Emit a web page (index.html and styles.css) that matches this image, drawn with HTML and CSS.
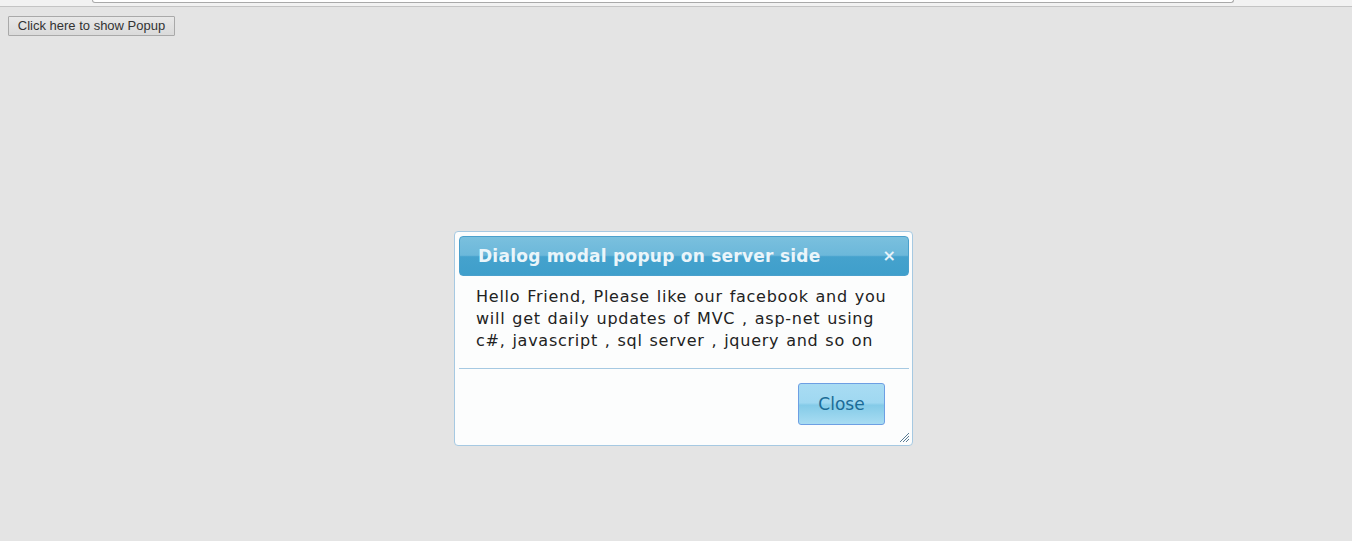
FILE: index.html
```html
<!DOCTYPE html>
<html>
<head>
<meta charset="utf-8">
<title>Dialog modal popup</title>
<link rel="stylesheet" href="styles.css">
</head>
<body>
<div class="topstrip">
  <div class="topfield"></div>
</div>
<div class="page">
  <button class="show-btn" type="button">Click here to show Popup</button>
</div>

<div class="dialog" role="dialog">
  <div class="dialog-titlebar">
    <span class="dialog-title">Dialog modal popup on server side</span>
    <span class="dialog-x">&#215;</span>
  </div>
  <div class="dialog-content">
    Hello Friend, Please like our facebook and you will get daily updates of MVC , asp-net using c#, javascript , sql server , jquery and so on
  </div>
  <div class="dialog-buttonpane">
    <button class="close-btn" type="button">Close</button>
  </div>
  <svg class="resize-grip" width="11" height="11" viewBox="0 0 11 11">
    <path d="M10 1 L1 10 M10 4 L4 10 M10 7 L7 10" stroke="#5a7c94" stroke-width="1" fill="none"/>
  </svg>
</div>
</body>
</html>
```
FILE: styles.css
```css
html, body {
  margin: 0;
  padding: 0;
  background: #e4e4e4;
  height: 100%;
}

body {
  font-family: "Liberation Sans", Arial, sans-serif;
}

.topstrip {
  height: 6px;
  background: #f2f2f2;
  border-bottom: 1px solid #c4c4c4;
}

.topfield {
  margin-left: 92px;
  width: 1140px;
  height: 2px;
  border: 1px solid #a9a9a9;
  border-top: none;
  border-radius: 0 0 3px 3px;
  background: #ffffff;
}

.page {
  padding: 9px 8px;
}

.show-btn {
  font-family: "Liberation Sans", Arial, sans-serif;
  font-size: 13px;
  color: #333;
  height: 20px;
  width: 167px;
  padding: 0;
  border: 1px solid #a9a9a9;
  background: linear-gradient(#e8e8e8, #dadada);
  border-radius: 1px;
  line-height: 18px;
}

/* modal dialog box, laid over the page */
.dialog {
  position: absolute;
  left: 454px;
  top: 231px;
  width: 450px;
  height: 205px;
  padding: 4px 3px 4px 4px;
  background: #fcfdfd;
  border: 1px solid #a6c9e2;
  border-radius: 4px;
  font-family: "DejaVu Sans", Verdana, sans-serif;
}

.dialog-titlebar {
  height: 38px;
  border: 1px solid #4aa0cc;
  border-radius: 4px;
  background: linear-gradient(#7ac0de 0%, #6cb8da 48%, #45a2cd 52%, #3f9fcb 100%);
  display: flex;
  align-items: center;
  justify-content: space-between;
  padding: 0 12px 0 18px;
}

.dialog-title {
  color: #eaf5fa;
  font-weight: bold;
  font-size: 17px;
  letter-spacing: 0.25px;
}

.dialog-x {
  color: #e6f3fa;
  font-weight: bold;
  font-size: 16px;
  line-height: 1;
}

.dialog-content {
  height: 67px;
  padding: 10px 10px 15px 17px;
  font-size: 16px;
  line-height: 22px;
  letter-spacing: 0.75px;
  word-spacing: 1px;
  color: #222222;
}

.dialog-buttonpane {
  border-top: 1px solid #a6c9e2;
  display: flex;
  justify-content: flex-end;
  padding: 14px 24px 0 0;
}

.close-btn {
  width: 87px;
  height: 42px;
  border: 1px solid #6d9fe3;
  border-radius: 3px;
  background: linear-gradient(#a9dcf3 0%, #9fd8f1 47%, #84cbe8 53%, #a8dcf2 100%);
  color: #1b6b97;
  font-family: "DejaVu Sans", Verdana, sans-serif;
  font-size: 17px;
  padding: 0;
}

.resize-grip {
  position: absolute;
  right: 2px;
  bottom: 2px;
}
```
